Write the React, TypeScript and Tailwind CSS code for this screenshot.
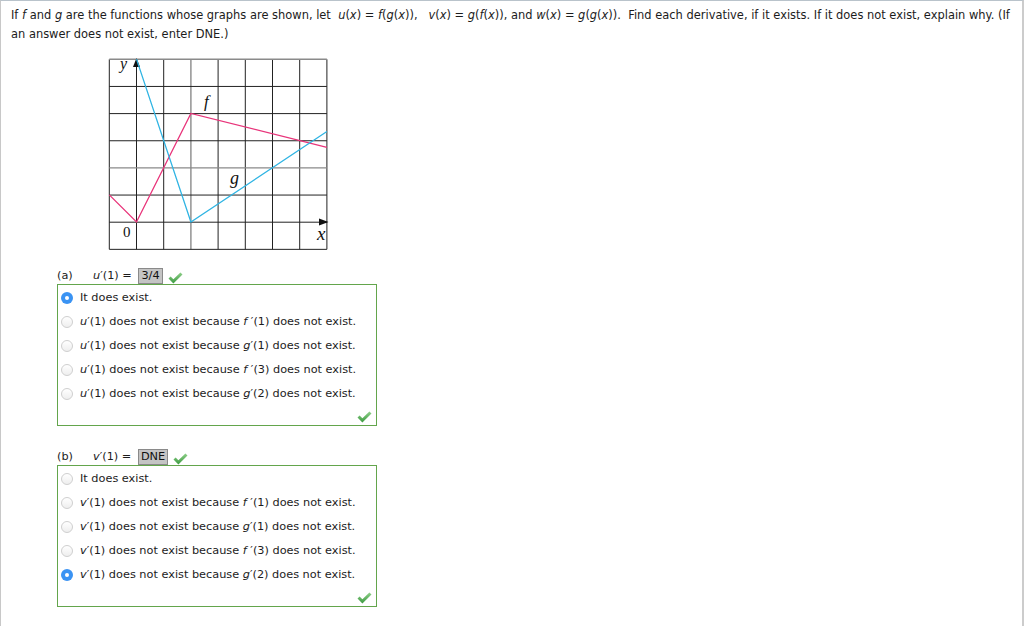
import React from "react";

const FONT = { fontFamily: '"DejaVu Sans", Verdana, sans-serif' };

function Check() {
  return (
    <svg width="15" height="12" viewBox="0 0 15 12">
      <defs>
        <linearGradient id="cg" x1="0" y1="0" x2="0" y2="1">
          <stop offset="0" stopColor="#8fd08a" />
          <stop offset="1" stopColor="#3c9a40" />
        </linearGradient>
      </defs>
      <polygon points="0.5,6.5 2.6,4.4 5.4,7.2 12.4,0.4 14.5,2.5 5.4,11.5" fill="url(#cg)" />
    </svg>
  );
}

function Radio({ on }: { on: boolean }) {
  return on ? (
    <span className="w-[12px] h-[12px] rounded-full bg-[#3a93f3] flex items-center justify-center shrink-0">
      <span className="w-[4px] h-[4px] rounded-full bg-white" />
    </span>
  ) : (
    <span className="w-[12px] h-[12px] rounded-full border border-[#cfcfcf] bg-gradient-to-b from-white to-[#eeeeee] shrink-0" />
  );
}

const I = ({ children }: { children: React.ReactNode }) => <i>{children}</i>;

function Section({
  label,
  fn,
  answer,
  sel,
  className,
}: {
  label: string;
  fn: string;
  answer: string;
  sel: number;
  className?: string;
}) {
  const rows: React.ReactNode[] = [
    <>It does exist.</>,
    <>
      <I>{fn}</I>′(1) does not exist because <I>f</I> ′(1) does not exist.
    </>,
    <>
      <I>{fn}</I>′(1) does not exist because <I>g</I>′(1) does not exist.
    </>,
    <>
      <I>{fn}</I>′(1) does not exist because <I>f</I> ′(3) does not exist.
    </>,
    <>
      <I>{fn}</I>′(1) does not exist because <I>g</I>′(2) does not exist.
    </>,
  ];
  return (
    <div className={"ml-[46px] w-[320px] " + (className ?? "")}>
      <div className="flex items-center h-[16px]">
        <span className="w-[36px]">({label})</span>
        <span className="whitespace-pre">
          <I>{fn}</I>′(1) ={" "}
        </span>
        <span className="ml-[3px] h-[16px] px-[2px] border border-[#8a8a8a] bg-[#c4c4c4] leading-[14px] text-[#111]">
          {answer}
        </span>
        <span className="ml-[5px] mt-[3px]">
          <Check />
        </span>
      </div>
      <div className="border border-[#63a54c] h-[142px] flex flex-col pt-[1px]">
        {rows.map((r, i) => (
          <div key={i} className="flex items-center h-[24px] pl-[3px]">
            <Radio on={i === sel} />
            <span className="ml-[7px] whitespace-nowrap">{r}</span>
          </div>
        ))}
        <div className="flex justify-end pr-[4px] mt-[5px]">
          <Check />
        </div>
      </div>
    </div>
  );
}

function Graph() {
  const X = (x: number) => 36.5 + 27.2 * x;
  const Y = (y: number) => 172 - 27.15 * y;
  const vx = Array.from({ length: 9 }, (_, i) => 9.3 + 27.2 * i);
  const hy = Array.from({ length: 8 }, (_, j) => 9.3 + 27.15 * j);
  const f = [
    [-1, 1],
    [0, 0],
    [2, 4],
    [7, 2.75],
  ];
  const g = [
    [0, 6],
    [2, 0],
    [7, 10 / 3],
  ];
  const pts = (a: number[][]) => a.map(([x, y]) => `${X(x)},${Y(y)}`).join(" ");
  return (
    <svg width="240" height="200" viewBox="0 0 240 200" className="ml-[89px] mt-[6px] block">
      {vx.map((x, i) => (
        <line
          key={"v" + i}
          x1={x}
          y1={9.3}
          x2={x}
          y2={199.3}
          stroke={i === 3 ? "#8a8a8a" : "#222"}
          strokeWidth={i === 3 ? 1.4 : 1}
        />
      ))}
      {hy.map((y, j) => (
        <line
          key={"h" + j}
          x1={9.3}
          y1={y}
          x2={226.9}
          y2={y}
          stroke={j === 0 || j === 4 ? "#8a8a8a" : "#222"}
          strokeWidth={j === 0 || j === 4 ? 1.4 : 1}
        />
      ))}
      <polygon points={`${X(0)},8 ${X(0) - 3.5},17 ${X(0) + 3.5},17`} fill="#111" />
      <polygon points={`228.5,${Y(0)} 219,${Y(0) - 3.5} 219,${Y(0) + 3.5}`} fill="#111" />
      <polyline points={pts(f)} fill="none" stroke="#e8347a" strokeWidth="1.3" />
      <polyline points={pts(g)} fill="none" stroke="#2fb4e3" strokeWidth="1.3" />
      <g fontFamily='"Liberation Serif", "Times New Roman", serif' fontStyle="italic" fill="#111">
        <text x="20" y="19" fontSize="16">y</text>
        <text x="104" y="57" fontSize="17">f</text>
        <text x="130" y="134" fontSize="18">g</text>
        <text x="217" y="190" fontSize="19">x</text>
      </g>
      <text x="23" y="187" fontSize="15" fontFamily='"Liberation Serif", "Times New Roman", serif' fill="#111">
        0
      </text>
    </svg>
  );
}

export default function App() {
  return (
    <div className="w-[1024px] h-[626px] bg-white overflow-hidden text-[11.3px] text-[#1c1c1c]" style={FONT}>
      <div className="h-full border-t border-t-[#b9c3cb] border-l border-l-[#c8c8c8] border-r-2 border-r-[#cccccc] pl-[10px] pt-[5px]">
        <div className="leading-[19px] whitespace-pre text-[11.45px]">
          If <I>f</I> and <I>g</I> are the functions whose graphs are shown, let  <I>u</I>(<I>x</I>) = <I>f</I>(<I>g</I>(<I>x</I>)),   <I>v</I>(<I>x</I>) = <I>g</I>(<I>f</I>(<I>x</I>)), and <I>w</I>(<I>x</I>) = <I>g</I>(<I>g</I>(<I>x</I>)).  Find each derivative, if it exists. If it does not exist, explain why. (If
          <br />
          an answer does not exist, enter DNE.)
        </div>
        <Graph />
        <Section label="a" fn="u" answer="3/4" sel={0} className="mt-[18px]" />
        <Section label="b" fn="v" answer="DNE" sel={4} className="mt-[23px]" />
      </div>
    </div>
  );
}
